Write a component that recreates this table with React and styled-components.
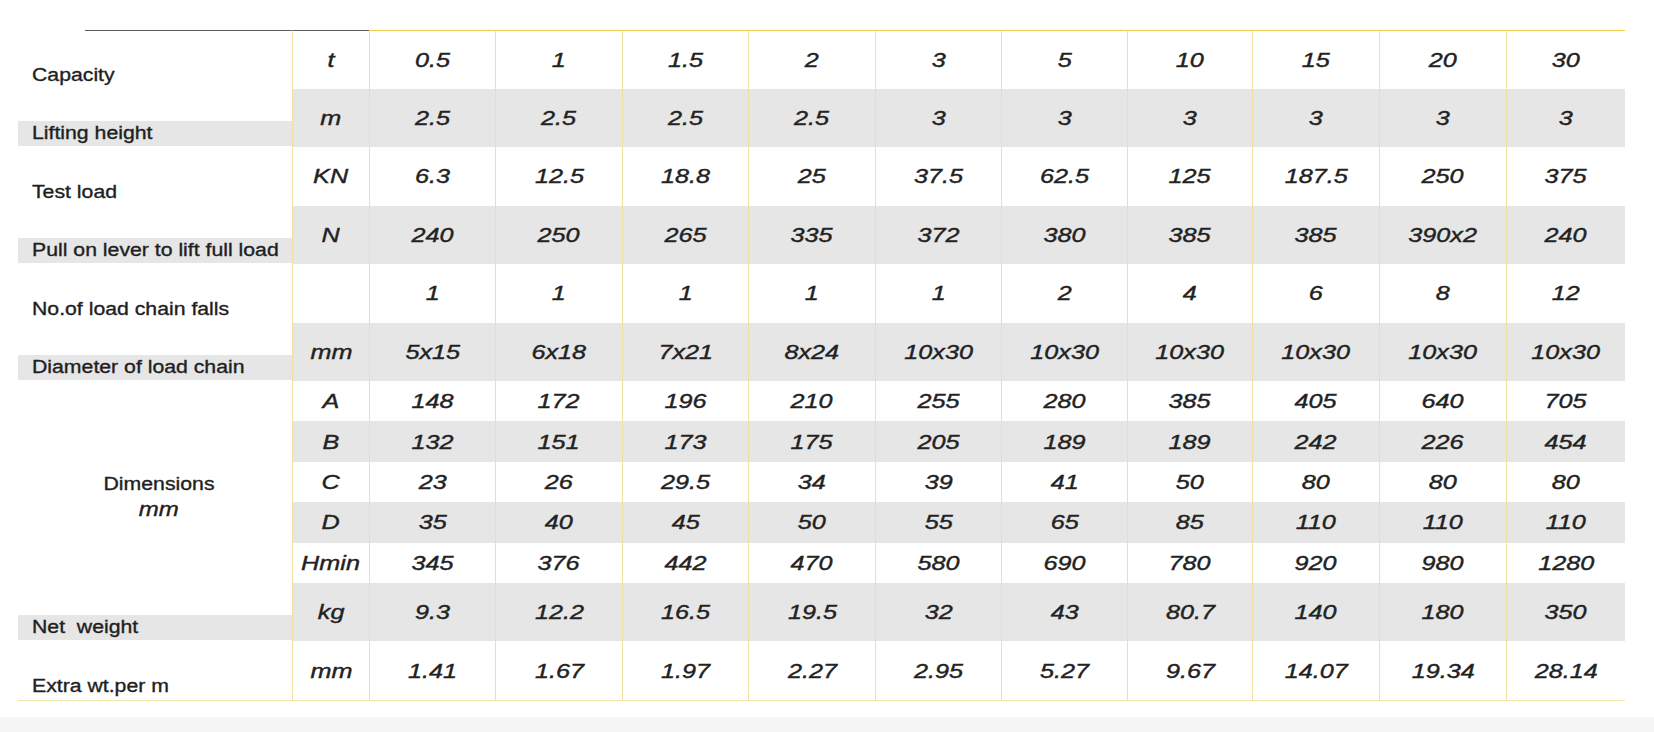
import React from 'react';
import styled, { createGlobalStyle, css } from 'styled-components';

// sizes read off the reference
const MAIN_ROW = 58.5;
const DIM_ROW = 40.4;
const COLS = [274, 77, 126, 127, 126, 127, 126, 126, 125, 127, 127, 119];

const GRAY = '#e6e6e6';
const YELLOW_LINE = '#eee1a2';
const YELLOW_TOP = '#f1cb4c';
const INK = '#222222';

const rows = [
  { label: 'Capacity', unit: 't', values: ['0.5', '1', '1.5', '2', '3', '5', '10', '15', '20', '30'] },
  { label: 'Lifting height', unit: 'm', shaded: true, values: ['2.5', '2.5', '2.5', '2.5', '3', '3', '3', '3', '3', '3'] },
  { label: 'Test load', unit: 'KN', values: ['6.3', '12.5', '18.8', '25', '37.5', '62.5', '125', '187.5', '250', '375'] },
  { label: 'Pull on lever to lift full load', unit: 'N', shaded: true, values: ['240', '250', '265', '335', '372', '380', '385', '385', '390x2', '240'] },
  { label: 'No.of load chain falls', unit: '', values: ['1', '1', '1', '1', '1', '2', '4', '6', '8', '12'] },
  { label: 'Diameter of load chain', unit: 'mm', shaded: true, values: ['5x15', '6x18', '7x21', '8x24', '10x30', '10x30', '10x30', '10x30', '10x30', '10x30'] },
  { dim: true, unit: 'A', values: ['148', '172', '196', '210', '255', '280', '385', '405', '640', '705'] },
  { dim: true, unit: 'B', shaded: true, values: ['132', '151', '173', '175', '205', '189', '189', '242', '226', '454'] },
  { dim: true, unit: 'C', values: ['23', '26', '29.5', '34', '39', '41', '50', '80', '80', '80'] },
  { dim: true, unit: 'D', shaded: true, values: ['35', '40', '45', '50', '55', '65', '85', '110', '110', '110'] },
  { dim: true, unit: 'Hmin', values: ['345', '376', '442', '470', '580', '690', '780', '920', '980', '1280'] },
  { label: 'Net  weight', unit: 'kg', shaded: true, values: ['9.3', '12.2', '16.5', '19.5', '32', '43', '80.7', '140', '180', '350'] },
  { label: 'Extra wt.per m', unit: 'mm', values: ['1.41', '1.67', '1.97', '2.27', '2.95', '5.27', '9.67', '14.07', '19.34', '28.14'] },
];

const GlobalStyle = createGlobalStyle`
  html, body {
    margin: 0;
    padding: 0;
    background: #ffffff;
  }
  body {
    font-family: "Liberation Sans", Arial, Helvetica, sans-serif;
    color: ${INK};
  }
`;

const Page = styled.div`
  display: flex;
  flex-direction: column;
  min-height: 100vh;
  padding-top: 30px;
  box-sizing: border-box;
`;

const SpecGrid = styled.div`
  display: grid;
  grid-template-columns: ${COLS.map((c) => c + 'px').join(' ')};
  grid-template-rows: ${rows.map((r) => (r.dim ? DIM_ROW : MAIN_ROW) + 'px').join(' ')};
  margin-left: 18px;
  width: ${COLS.reduce((a, b) => a + b, 0)}px;
  border-bottom: 1px solid #f2e8ad;
`;

const LabelCell = styled.div`
  position: relative;
  display: flex;
  align-items: flex-end;
  ${(p) => p.$first && css`
    &::before {
      content: '';
      position: absolute;
      top: 0;
      left: 67px;
      right: 0;
      height: 1px;
      background: #5c5c5c;
    }
  `}
`;

const LabelBand = styled.div`
  display: flex;
  align-items: center;
  width: 100%;
  height: 25px;
  margin-bottom: 1px;
  padding-left: 14px;
  box-sizing: border-box;
  background: ${(p) => (p.$shaded ? GRAY : 'transparent')};
`;

const LabelText = styled.span`
  display: inline-block;
  font-size: 18px;
  white-space: pre;
  color: #1f1f1f;
  -webkit-text-stroke: 0.35px #1f1f1f;
  transform: scaleX(1.18);
  transform-origin: left center;
`;

const DimCell = styled.div`
  grid-row: span 5;
  display: flex;
  flex-direction: column;
  align-items: center;
  justify-content: center;
  padding-top: 30px;
  padding-left: 8px;
  box-sizing: border-box;
`;

const DimTitle = styled.span`
  display: inline-block;
  font-size: 18px;
  line-height: 24px;
  color: #1f1f1f;
  -webkit-text-stroke: 0.35px #1f1f1f;
  transform: scaleX(1.18);
`;

const DimUnit = styled.span`
  display: inline-block;
  font-size: 20px;
  font-style: italic;
  line-height: 26px;
  color: #1f1f1f;
  -webkit-text-stroke: 0.35px #1f1f1f;
  transform: scaleX(1.2);
`;

const Cell = styled.div`
  display: flex;
  align-items: center;
  justify-content: center;
  box-sizing: border-box;
  border-left: 1px solid ${YELLOW_LINE};
  background: ${(p) => (p.$shaded ? GRAY : '#ffffff')};
  ${(p) => p.$top && css`
    border-top: 1px solid ${p.$top};
  `}
`;

const Value = styled.span`
  display: inline-block;
  font-size: 21px;
  font-style: italic;
  color: ${INK};
  -webkit-text-stroke: 0.4px ${INK};
  transform: scaleX(1.2);
`;

const FooterStrip = styled.div`
  flex: 1;
  margin-top: 16px;
  background: #f5f5f5;
`;

export default function App() {
  return (
    <Page>
      <GlobalStyle />
      <SpecGrid>
        {rows.map((row, i) => {
          const first = i === 0;
          const cells = [];
          if (!row.dim) {
            cells.push(
              <LabelCell key={'l' + i} $first={first}>
                <LabelBand $shaded={row.shaded}>
                  <LabelText>{row.label}</LabelText>
                </LabelBand>
              </LabelCell>
            );
          } else if (row.unit === 'A') {
            cells.push(
              <DimCell key="dim">
                <DimTitle>Dimensions</DimTitle>
                <DimUnit>mm</DimUnit>
              </DimCell>
            );
          }
          cells.push(
            <Cell key={'u' + i} $shaded={row.shaded} $top={first ? '#5c5c5c' : null}>
              <Value>{row.unit}</Value>
            </Cell>
          );
          row.values.forEach((v, j) => {
            cells.push(
              <Cell key={i + '-' + j} $shaded={row.shaded} $top={first ? YELLOW_TOP : null}>
                <Value>{v}</Value>
              </Cell>
            );
          });
          return cells;
        })}
      </SpecGrid>
      <FooterStrip />
    </Page>
  );
}
